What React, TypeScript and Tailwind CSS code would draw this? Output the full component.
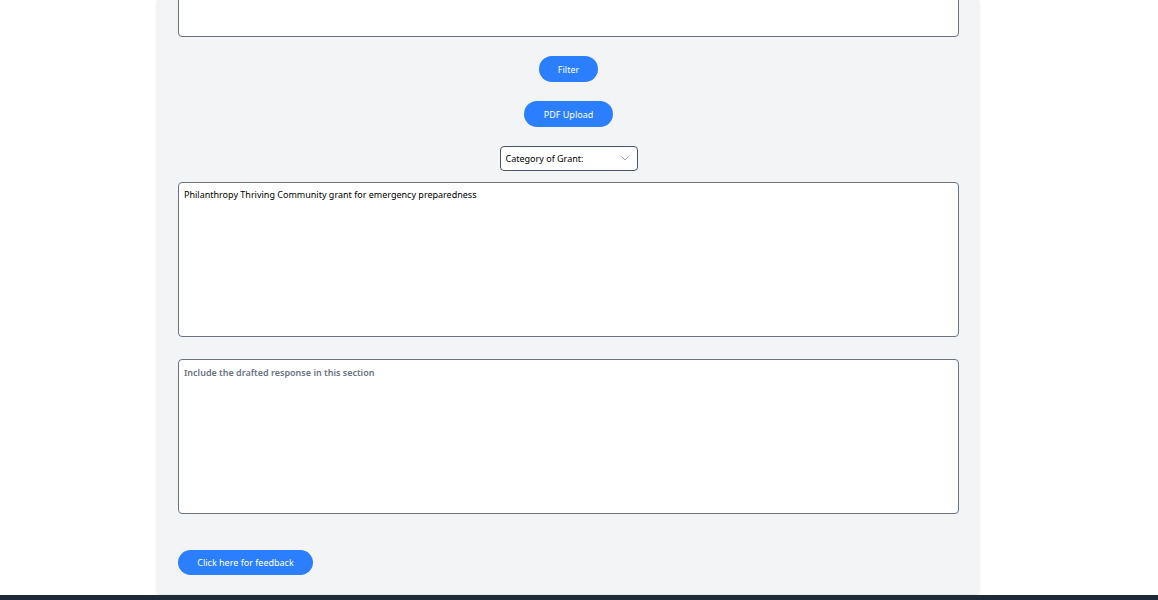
import { useState } from 'react';

const font = { fontFamily: '"Noto Sans", "Open Sans", sans-serif' };

export default function App() {
  const [category, setCategory] = useState('');
  const [prompt, setPrompt] = useState('Philanthropy Thriving Community grant for emergency preparedness');
  const [draft, setDraft] = useState('');

  return (
    <div className="min-h-screen bg-white flex flex-col overflow-hidden" style={font}>
      <div className="ml-[157px] w-[822px] h-[594px] bg-gray-100 shadow-sm pl-[21px] pr-[20px] flex flex-col items-center">
        {/* top textarea, scrolled out of view */}
        <textarea
          className="block w-full h-[154px] shrink-0 -mt-[117px] bg-white border border-gray-500 rounded resize-none"
          readOnly
        />

        <button className="block shrink-0 h-[26px] w-[59px] mt-[19px] rounded-full bg-blue-500 text-white text-[9px] leading-none">
          Filter
        </button>

        <button className="block shrink-0 h-[26px] w-[89px] mt-[19px] rounded-full bg-blue-500 text-white text-[9px] leading-none">
          PDF Upload
        </button>

        <div className="relative shrink-0 w-[138px] h-[25px] mt-[19px]">
          <select
            value={category}
            onChange={(e) => setCategory(e.target.value)}
            className="block appearance-none w-full h-[25px] bg-white border border-gray-600 rounded pl-[5px] text-[9px] text-black outline-none"
          >
            <option value="">Category of Grant:</option>
            <option value="community">Community</option>
            <option value="education">Education</option>
          </select>
          <div className="pointer-events-none absolute inset-y-0 right-[9px] flex items-center">
            <svg width="8" height="5" viewBox="0 0 8 5" fill="none">
              <path d="M0.5 0.5L4 4L7.5 0.5" stroke="#9ca3af" strokeWidth="1" />
            </svg>
          </div>
        </div>

        <textarea
          value={prompt}
          onChange={(e) => setPrompt(e.target.value)}
          className="block shrink-0 w-full h-[155px] mt-[11px] bg-white border border-gray-500 rounded px-[5px] py-[6px] text-[9px] leading-[12px] text-black resize-none outline-none"
        />

        <textarea
          value={draft}
          onChange={(e) => setDraft(e.target.value)}
          placeholder="Include the drafted response in this section"
          className="block shrink-0 w-full h-[155px] mt-[22px] bg-white border border-gray-500 rounded px-[5px] pt-[7px] pb-[5px] text-[9px] leading-[12px] text-black placeholder:text-gray-500 placeholder:font-semibold resize-none outline-none"
        />

        <button className="block shrink-0 self-start h-[25px] w-[135px] mt-[36px] rounded-full bg-blue-500 text-white text-[9px] leading-none">
          Click here for feedback
        </button>
      </div>

      <footer className="h-[40px] bg-gray-800 mt-px" />
    </div>
  );
}
